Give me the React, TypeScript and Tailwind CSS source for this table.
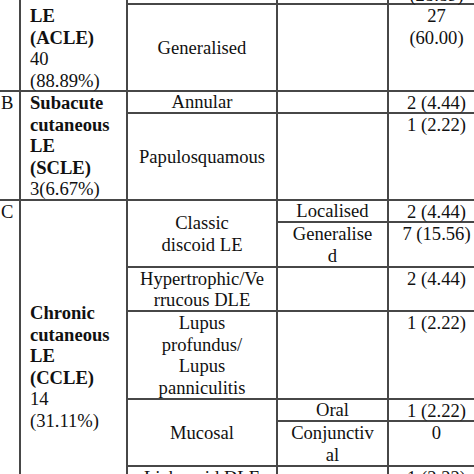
import React from "react";

function Lines({ lines }: { lines: string[] }) {
  return (
    <>
      {lines.map((l, i) => (
        <span key={i} className="block whitespace-nowrap">
          {l}
        </span>
      ))}
    </>
  );
}

export default function App() {
  const b = "border-r-2 border-b-2 border-[#474747]";
  return (
    <div className="w-[474px] h-[474px] overflow-hidden bg-white">
      <div
        className={
          "-mt-[38px] grid grid-cols-[21px_107px_150px_111px_97px] grid-rows-[43px_87px_22px_87px_22px_45px_44px_88px_22px_45px_22px] font-['Liberation_Serif','Times_New_Roman',serif] text-[18.6px] leading-[21.5px] text-[#111]"
        }
      >
        {/* Column 1 */}
        <div className={`${b} col-start-1 row-start-1 row-span-2 pl-[1px]`}>A</div>
        <div className={`${b} col-start-1 row-start-3 row-span-2 pl-[1px]`}>B</div>
        <div className={`${b} col-start-1 row-start-5 row-span-7 pl-[1px]`}>C</div>

        {/* Column 2 */}
        <div className={`${b} col-start-2 row-start-1 row-span-2 pl-[9px]`}>
          <span className="block font-bold -mt-[4px]">Acute</span>
          <span className="block font-bold">cutaneous</span>
          <span className="block font-bold mt-[4px]">LE</span>
          <span className="block font-bold">(ACLE)</span>
          <span className="block">40</span>
          <span className="block">(88.89%)</span>
        </div>
        <div className={`${b} col-start-2 row-start-3 row-span-2 pl-[9px]`}>
          <span className="block font-bold">Subacute</span>
          <span className="block font-bold">cutaneous</span>
          <span className="block font-bold">LE</span>
          <span className="block font-bold">(SCLE)</span>
          <span className="block">3(6.67%)</span>
        </div>
        <div className={`${b} col-start-2 row-start-5 row-span-7 pl-[9px] pt-[101px]`}>
          <span className="block font-bold">Chronic</span>
          <span className="block font-bold">cutaneous</span>
          <span className="block font-bold">LE</span>
          <span className="block font-bold">(CCLE)</span>
          <span className="block">14</span>
          <span className="block">(31.11%)</span>
        </div>

        {/* Column 3 */}
        <div className={`${b} col-start-3 row-start-1 flex flex-col items-center justify-center text-center`}>
          <Lines lines={["Localised"]} />
        </div>
        <div className={`${b} col-start-3 row-start-2 flex flex-col items-center justify-center text-center`}>
          <Lines lines={["Generalised"]} />
        </div>
        <div className={`${b} col-start-3 row-start-3 flex flex-col items-center justify-center text-center`}>
          <Lines lines={["Annular"]} />
        </div>
        <div className={`${b} col-start-3 row-start-4 flex flex-col items-center justify-center text-center`}>
          <Lines lines={["Papulosquamous"]} />
        </div>
        <div className={`${b} col-start-3 row-start-5 row-span-2 flex flex-col items-center justify-center text-center`}>
          <Lines lines={["Classic", "discoid LE"]} />
        </div>
        <div className={`${b} col-start-3 row-start-7 flex flex-col items-center justify-center text-center`}>
          <Lines lines={["Hypertrophic/Ve", "rrucous DLE"]} />
        </div>
        <div className={`${b} col-start-3 row-start-8 flex flex-col items-center justify-center text-center`}>
          <Lines lines={["Lupus", "profundus/", "Lupus", "panniculitis"]} />
        </div>
        <div className={`${b} col-start-3 row-start-9 row-span-2 flex flex-col items-center justify-center text-center`}>
          <Lines lines={["Mucosal"]} />
        </div>
        <div className={`${b} col-start-3 row-start-11 flex flex-col items-center justify-start text-center`}>
          <Lines lines={["Lichenoid DLE"]} />
        </div>

        {/* Column 4 */}
        <div className={`${b} col-start-4 row-start-1`} />
        <div className={`${b} col-start-4 row-start-2`} />
        <div className={`${b} col-start-4 row-start-3`} />
        <div className={`${b} col-start-4 row-start-4`} />
        <div className={`${b} col-start-4 row-start-5 flex flex-col items-center justify-center text-center`}>
          <Lines lines={["Localised"]} />
        </div>
        <div className={`${b} col-start-4 row-start-6 flex flex-col items-center justify-center text-center`}>
          <Lines lines={["Generalise", "d"]} />
        </div>
        <div className={`${b} col-start-4 row-start-7`} />
        <div className={`${b} col-start-4 row-start-8`} />
        <div className={`${b} col-start-4 row-start-9 flex flex-col items-center justify-center text-center`}>
          <Lines lines={["Oral"]} />
        </div>
        <div className={`${b} col-start-4 row-start-10 flex flex-col items-center justify-center text-center`}>
          <Lines lines={["Conjunctiv", "al"]} />
        </div>
        <div className={`${b} col-start-4 row-start-11`} />

        {/* Column 5 */}
        <div className={`${b} col-start-5 row-start-1 text-center`}>
          <Lines lines={["13", "(28.89)"]} />
        </div>
        <div className={`${b} col-start-5 row-start-2 text-center`}>
          <Lines lines={["27", "(60.00)"]} />
        </div>
        <div className={`${b} col-start-5 row-start-3 text-center`}>
          <Lines lines={["2 (4.44)"]} />
        </div>
        <div className={`${b} col-start-5 row-start-4 text-center`}>
          <Lines lines={["1 (2.22)"]} />
        </div>
        <div className={`${b} col-start-5 row-start-5 text-center`}>
          <Lines lines={["2 (4.44)"]} />
        </div>
        <div className={`${b} col-start-5 row-start-6 text-center`}>
          <Lines lines={["7 (15.56)"]} />
        </div>
        <div className={`${b} col-start-5 row-start-7 text-center`}>
          <Lines lines={["2 (4.44)"]} />
        </div>
        <div className={`${b} col-start-5 row-start-8 text-center`}>
          <Lines lines={["1 (2.22)"]} />
        </div>
        <div className={`${b} col-start-5 row-start-9 text-center`}>
          <Lines lines={["1 (2.22)"]} />
        </div>
        <div className={`${b} col-start-5 row-start-10 text-center`}>
          <Lines lines={["0"]} />
        </div>
        <div className={`${b} col-start-5 row-start-11 text-center`}>
          <Lines lines={["1 (2.22)"]} />
        </div>
      </div>
    </div>
  );
}
